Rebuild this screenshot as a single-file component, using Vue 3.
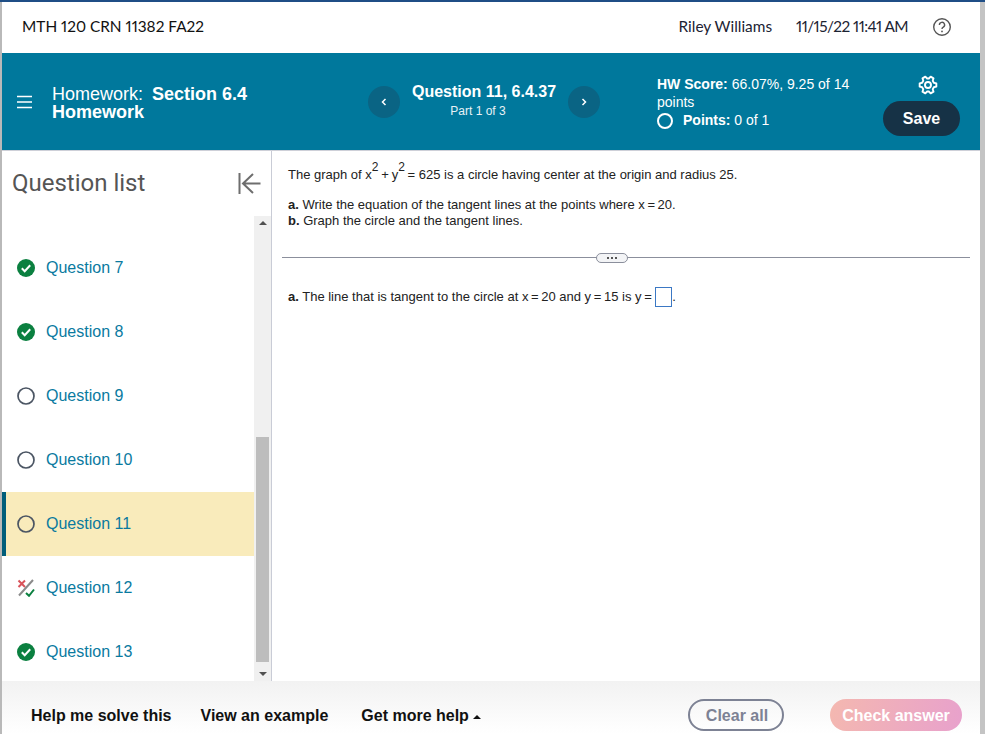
<script setup>
const questions = [
  { label: 'Question 7', state: 'done' },
  { label: 'Question 8', state: 'done' },
  { label: 'Question 9', state: 'open' },
  { label: 'Question 10', state: 'open' },
  { label: 'Question 11', state: 'open', current: true },
  { label: 'Question 12', state: 'partial' },
  { label: 'Question 13', state: 'done' }
]
</script>

<template>
  <div class="page">
    <div class="frame">
      <header class="topbar">
        <span class="course">MTH 120 CRN 11382 FA22</span>
        <span class="user">Riley Williams</span>
        <span class="stamp">11/15/22 11:41 AM</span>
        <svg class="help" width="20" height="20" viewBox="0 0 20 20" fill="none">
          <circle cx="10" cy="10" r="8.3" stroke="#555" stroke-width="1.4" />
          <path d="M7.4 8a2.6 2.6 0 1 1 3.9 2.2c-.9.5-1.3 1-1.3 1.9" stroke="#555" stroke-width="1.4" fill="none" />
          <circle cx="10" cy="14.4" r="0.9" fill="#555" />
        </svg>
      </header>

      <section class="banner">
        <svg class="menu" width="16" height="14" viewBox="0 0 16 14">
          <path d="M0 1.5h15M0 7h15M0 12.5h15" stroke="#fff" stroke-width="1.6" />
        </svg>
        <div class="title">Homework:<b class="title-gap">Section 6.4</b><br /><b>Homework</b></div>
        <div class="nav">
          <button class="round">
            <svg width="6" height="8" viewBox="0 0 6 8"><path d="M4.5 1 1.5 4l3 3" stroke="#fff" stroke-width="1.5" fill="none" /></svg>
          </button>
          <div class="where">
            <b>Question 11, 6.4.37</b>
            <span>Part 1 of 3</span>
          </div>
          <button class="round">
            <svg width="6" height="8" viewBox="0 0 6 8"><path d="M1.5 1l3 3-3 3" stroke="#fff" stroke-width="1.5" fill="none" /></svg>
          </button>
        </div>
        <div class="score">
          <div><b>HW Score:</b> 66.07%, 9.25 of 14</div>
          <div>points</div>
          <div class="points">
            <i class="ring-white"></i>
            <span><b>Points:</b> 0 of 1</span>
          </div>
        </div>
        <div class="actions">
          <svg class="gear" width="20" height="20" viewBox="0 0 24 24" fill="none" stroke="#fff" stroke-width="2.300" stroke-linejoin="round">
            <g transform="rotate(90 12 12)">
              <path d="M10 2h4l.7 3 2.3 1.300 3-.9 2 3.400-2.200 2.200v2l2.200 2.200-2 3.400-3-.9L14.700 19l-.7 3h-4l-.7-3L7 17.700l-3 .9-2-3.400L4.200 13v-2L2 8.800l2-3.400 3 .9L9.300 5z" />
            </g>
            <circle cx="12" cy="12" r="3.600" />
          </svg>
          <button class="save">Save</button>
        </div>
      </section>

      <div class="middle">
        <aside class="side">
          <div class="side-head">
            <span class="side-title">Question list</span>
            <svg class="collapse" width="23" height="21" viewBox="0 0 23 21" fill="none" stroke="#6e6e6e" stroke-width="2">
              <path d="M1.500 0v21M22.500 10.500H5M15 1 5 10.500 15 20" />
            </svg>
          </div>
          <div class="side-body">
            <ul class="list">
              <li v-for="q in questions" :key="q.label" class="row" :class="{ current: q.current }">
                <svg v-if="q.state === 'done'" class="state" width="18" height="18" viewBox="0 0 18 18">
                  <circle cx="9" cy="9" r="9" fill="#0b8040" />
                  <path d="M4.800 9.300 7.700 12.200 13.200 6.300" stroke="#fff" stroke-width="2" fill="none" />
                </svg>
                <svg v-else-if="q.state === 'open'" class="state" width="18" height="18" viewBox="0 0 18 18">
                  <circle cx="9" cy="9" r="8" fill="none" stroke="#4b5563" stroke-width="1.700" />
                </svg>
                <svg v-else class="state" width="18" height="18" viewBox="0 0 18 18">
                  <path d="M1.500 1.500 8 8M8 1.500 1.500 8" stroke="#d9535a" stroke-width="2" />
                  <path d="M2 16.500 16 1" stroke="#8a8a8a" stroke-width="2" />
                  <path d="M9 14l3 2.800 5-6.300" stroke="#0b8040" stroke-width="2" fill="none" />
                </svg>
                <span>{{ q.label }}</span>
              </li>
            </ul>
            <div class="track">
              <div class="arrow-up"></div>
              <div class="thumb"></div>
              <div class="arrow-down"></div>
            </div>
          </div>
        </aside>

        <main class="content">
          <p class="intro">The graph of x<sup>2</sup> <span class="plus">+</span>y<sup>2</sup> <span class="eq">=</span> 625 is a circle having center at the origin and radius 25.</p>
          <p class="parts"><b>a.</b> Write the equation of the tangent lines at the points where <span class="tight">x = 20.</span><br /><b>b.</b> Graph the circle and the tangent lines.</p>
          <div class="divider">
            <span class="dots"><i></i><i></i><i></i></span>
          </div>
          <p class="answer"><b>a.</b> The line that is tangent to the circle at <span class="tight">x = 20</span> and <span class="tight">y = 15</span> is <span class="tight">y =</span> <span class="box"></span>.</p>
        </main>
      </div>

      <footer class="foot">
        <span class="link first">Help me solve this</span>
        <span class="link second">View an example</span>
        <span class="link third">Get more help <i class="caret"></i></span>
        <button class="clear">Clear all</button>
        <button class="check">Check answer</button>
      </footer>
    </div>
    <div class="edge"></div>
  </div>
</template>

<style>
html, body { margin: 0; padding: 0; background: #fff; overflow: hidden; }
</style>

<style scoped>
.page {
  width: 985px;
  height: 734px;
  display: flex;
  overflow: hidden;
  font-family: "Liberation Sans", Arial, sans-serif;
  background: #fff;
  box-sizing: border-box;
  border-top: 2px solid #1f4e86;
}
.frame {
  width: 978px;
  height: 732px;
  border-left: 2px solid #b9b9b9;
  display: flex;
  flex-direction: column;
}
.edge { width: 5px; background: #c4c4c4; }
.topbar {
  height: 51px;
  flex: none;
  display: flex;
  align-items: center;
  padding: 0 28px 4px 20px;
  box-sizing: border-box;
  color: #1c2333;
  font-family: Lato, sans-serif;
  font-size: 15.4px;
  font-variant-numeric: proportional-nums;
}
.course { margin-right: auto; color: #111; }
.stamp { margin-left: 24px; letter-spacing: -0.55px; }
.help { margin-left: 24px; margin-top: 2px; }
.banner {
  height: 97px;
  flex: none;
  background: #00789c;
  color: #fff;
  display: flex;
  align-items: center;
  box-sizing: border-box;
}
.menu { margin-left: 15px; flex: none; }
.title {
  width: 316px;
  margin-left: 19px;
  font-size: 18px;
  line-height: 18px;
  margin-top: 3px;
}
.title-gap { margin-left: 9px; }
.nav { display: flex; align-items: center; width: 289px; }
.round {
  width: 32px;
  height: 32px;
  border: 0;
  padding: 0;
  border-radius: 50%;
  background: #0a6484;
  display: flex;
  align-items: center;
  justify-content: center;
}
.where {
  width: 168px;
  text-align: center;
  display: flex;
  flex-direction: column;
  margin-top: -2px;
}
.where b { font-size: 16px; line-height: 20px; }
.where span { font-size: 12px; line-height: 18px; color: #e8f2f6; margin-right: 12px; }
.score {
  width: 226px;
  font-size: 14px;
  line-height: 18px;
  margin-top: 1px;
}
.points { display: flex; align-items: center; gap: 10px; }
.ring-white {
  width: 12px;
  height: 12px;
  border: 2px solid #fff;
  border-radius: 50%;
  display: block;
  margin-top: 2px;
}
.actions {
  width: 77px;
  display: flex;
  flex-direction: column;
  align-items: center;
  margin-top: 8px;
}
.gear { margin-bottom: 6px; margin-left: 12px; }
.save {
  width: 77px;
  height: 35px;
  border: 0;
  border-radius: 18px;
  background: #163246;
  color: #fff;
  font: bold 16px "Liberation Sans", Arial, sans-serif;
  padding: 1px 0 0;
}
.middle {
  flex: 1;
  min-height: 0;
  display: flex;
  border-top: 1px solid #ced0d8;
}
.side {
  width: 269px;
  flex: none;
  border-right: 1px solid #c9ccd6;
  box-sizing: content-box;
  display: flex;
  flex-direction: column;
}
.side-head {
  height: 65px;
  flex: none;
  display: flex;
  align-items: center;
  justify-content: space-between;
  padding: 0 10px 2px;
  box-sizing: border-box;
}
.side-title { font-family: Roboto, sans-serif; font-size: 24px; color: #555; }
.collapse { margin-top: 2px; }
.side-body { flex: 1; min-height: 0; display: flex; }
.list {
  flex: 1;
  list-style: none;
  margin: 0;
  padding: 20px 0 0;
}
.row {
  height: 64px;
  display: flex;
  align-items: center;
  padding-left: 15px;
  gap: 11px;
  color: #0a7a9f;
  font-size: 16px;
  box-sizing: border-box;
}
.row.current {
  background: #f9ebbb;
  border-left: 4px solid #005d7a;
  padding-left: 11px;
}
.state { flex: none; }
.track {
  width: 17px;
  flex: none;
  background: #f0f0f0;
  display: flex;
  flex-direction: column;
  align-items: center;
}
.arrow-up {
  margin-top: 5px;
  border: 4px solid transparent;
  border-top: 0;
  border-bottom: 4px solid #505050;
}
.thumb {
  width: 13px;
  height: 225px;
  background: #bdbdbd;
  margin-top: auto;
  margin-bottom: 10px;
}
.arrow-down {
  margin-bottom: 5px;
  border: 4px solid transparent;
  border-bottom: 0;
  border-top: 4px solid #505050;
}
.content {
  flex: 1;
  min-width: 0;
  padding: 0 10px 0 10px;
  font-size: 13px;
  color: #222;
}
.intro {
  margin: 15px 0 0 6px;
  line-height: 18px;
}
sup { font-size: 12px; line-height: 0; vertical-align: 8px; }
.plus { margin-left: -1px; margin-right: 3px; }
.eq { margin-left: -1px; }
.parts {
  margin: 13px 0 0 6px;
  line-height: 16px;
}
.divider {
  height: 1px;
  background: #8b8f9c;
  margin-top: 28px;
  position: relative;
}
.dots {
  position: absolute;
  top: -4px;
  left: 314px;
  width: 32px;
  height: 10px;
  box-sizing: border-box;
  border: 1px solid #8b8f9c;
  border-radius: 6px;
  background: #f3f4f6;
  display: flex;
  align-items: center;
  justify-content: center;
  gap: 2px;
}
.dots i { width: 2px; height: 2px; background: #555; display: block; }
.answer {
  margin: 28px 0 0 6px;
  line-height: 22px;
}
.box {
  display: inline-block;
  width: 15px;
  height: 18px;
  border: 1px solid #3b78c4;
  vertical-align: -6px;
}
.tight { word-spacing: -1px; }
.foot {
  height: 53px;
  flex: none;
  background: linear-gradient(#f2f2f2, #fff);
  display: flex;
  align-items: center;
  padding-top: 15px;
  box-sizing: border-box;
}
.link { font-size: 16px; font-weight: bold; color: #111; margin-top: 2px; }
.first { margin-left: 29px; }
.second { margin-left: 29px; }
.third { margin-left: 33px; }
.caret {
  display: inline-block;
  border: 4px solid transparent;
  border-top: 0;
  border-bottom: 4px solid #111;
  vertical-align: 2px;
}
.clear {
  margin-left: auto;
  width: 96px;
  height: 32px;
  border: 2px solid #7d8294;
  border-radius: 16px;
  background: transparent;
  color: #7d8294;
  font: bold 16px "Liberation Sans", Arial, sans-serif;
  padding: 2px 0 0 2px;
}
.check {
  margin-left: 46px;
  margin-right: 18px;
  width: 132px;
  height: 32px;
  border: 0;
  border-radius: 16px;
  background: linear-gradient(100deg, #f4b8b0, #e8a1cc);
  color: #fff;
  font: bold 16px "Liberation Sans", Arial, sans-serif;
  padding: 2px 0 0;
}
</style>
